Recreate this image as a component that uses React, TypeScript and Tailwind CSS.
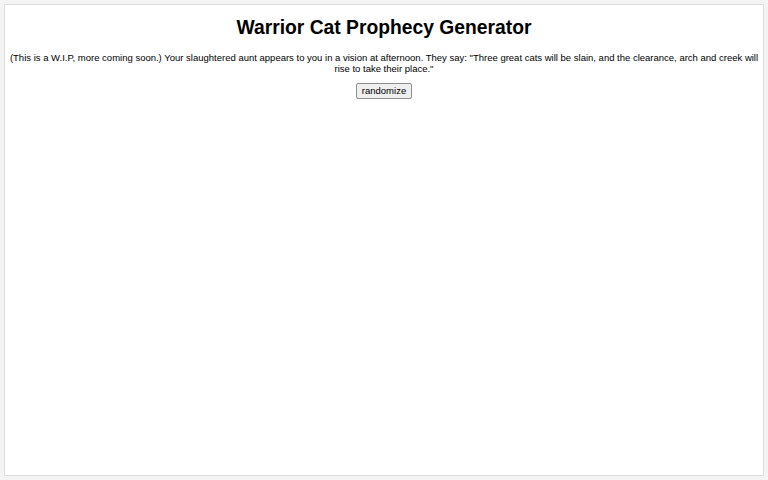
import React, { useState } from "react";

const relatives = ["aunt", "uncle", "mother", "father", "sister", "brother", "mentor"];
const states = ["slaughtered", "drowned", "poisoned", "departed", "starved"];
const times = ["afternoon", "dawn", "dusk", "midnight", "sunhigh"];

const pick = (list: string[]) => list[Math.floor(Math.random() * list.length)];

const App = () => {
  const [who, setWho] = useState({ state: "slaughtered", relative: "aunt", time: "afternoon" });

  const randomize = () => {
    setWho({ state: pick(states), relative: pick(relatives), time: pick(times) });
  };

  return (
    <div className="h-[480px] bg-[#f3f3f3] p-[4px] font-['Liberation_Sans',Arial,sans-serif] text-black">
      <div className="h-full border border-[#dcdcdc] bg-white px-[3px] text-center">
        <h1 className="mt-[11px] text-[19.3px] font-bold leading-[24px]">Warrior Cat Prophecy Generator</h1>
        <p className="mt-[12px] text-[9.5px] leading-[11px]">
          (This is a W.I.P, more coming soon.) Your {who.state} {who.relative} appears to you in a vision at{" "}
          {who.time}. They say: "Three great cats will be slain, and the clearance, arch and creek will rise to
          take their place."
        </p>
        <button
          className="mt-[9px] rounded-[2px] border border-[#8f8f8f] bg-[#efefef] px-[5px] py-[1px] text-[9.5px] leading-[12px]"
          onClick={randomize}
        >
          randomize
        </button>
      </div>
    </div>
  );
};

export default App;
